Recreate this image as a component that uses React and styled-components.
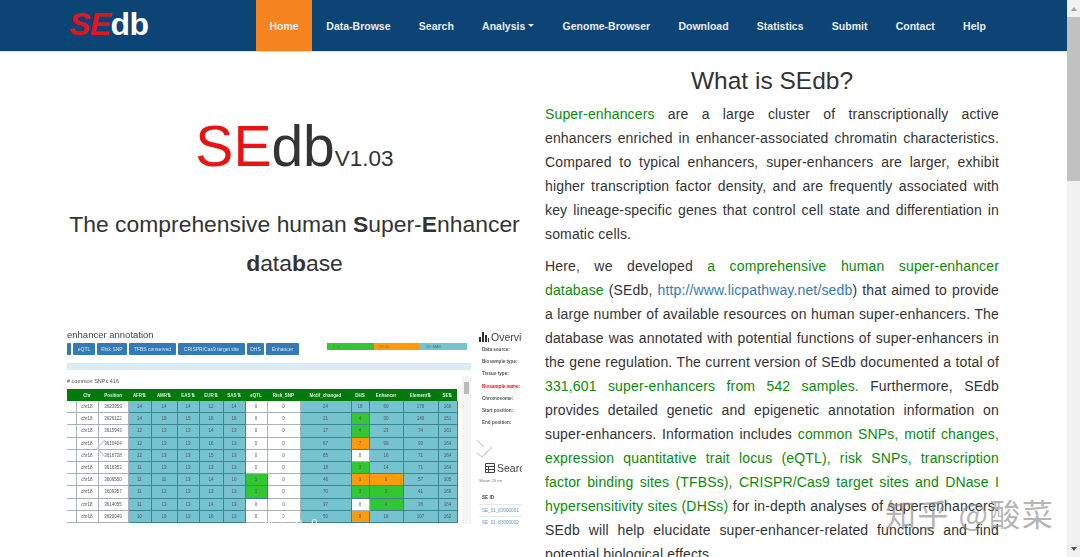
import React from "react";
import styled, { createGlobalStyle } from "styled-components";

const GlobalStyle = createGlobalStyle`
  html, body {
    margin: 0;
    padding: 0;
    overflow: hidden;
    background: #fff;
    font-family: "Liberation Sans", Arial, sans-serif;
  }
`;

const Page = styled.div`
  position: relative;
  display: flex;
  width: 1080px;
  height: 557px;
  overflow: hidden;
`;

const Main = styled.div`
  flex: 1;
  min-width: 0;
`;

const Navbar = styled.nav`
  display: flex;
  height: 51px;
  padding-left: 69px;
  background: #0c4475;
  border-bottom: 1px solid #c9e6f5;
`;

const Logo = styled.div`
  width: 187px;
  flex: none;
  font-size: 32px;
  font-weight: 700;
  line-height: 48px;
  color: #fff;
  letter-spacing: -0.6px;
  span {
    color: #e3141c;
    font-style: italic;
  }
`;

const NavItem = styled.a`
  display: flex;
  align-items: center;
  gap: 3px;
  flex: none;
  padding: 0 ${(p) => p.$pad || 14.15}px;
  font-size: 10.5px;
  font-weight: 700;
  white-space: nowrap;
  color: #e8eef3;
  background: ${(p) => (p.$active ? "#f5831f" : "transparent")};
`;

const Caret = styled.i`
  width: 0;
  height: 0;
  border-top: 3px solid #e8eef3;
  border-left: 3px solid transparent;
  border-right: 3px solid transparent;
`;

const Content = styled.div`
  display: flex;
  gap: 23px;
  padding-left: 67px;
`;

const LeftCol = styled.section`
  width: 455px;
  flex: none;
  color: #333;
  text-align: center;
`;

const BigTitle = styled.h1`
  margin: 59px 0 0;
  font-size: 57px;
  font-weight: 400;
  line-height: 70px;
  color: #333;
  span { color: #ea1313; }
  small { font-size: 22.5px; }
`;

const Subtitle = styled.h2`
  margin: 11px 0 0;
  font-size: 22.9px;
  font-weight: 400;
  line-height: 39px;
  white-space: pre;
  color: #333;
`;

const Shot = styled.div`
  position: relative;
  display: flex;
  gap: 8px;
  height: 197px;
  margin-top: 44px;
  overflow: hidden;
  text-align: left;
  filter: blur(0.5px);
`;

const ShotMain = styled.div`
  width: 404px;
  flex: none;
`;

const ShotTitle = styled.div`
  font-size: 9.5px;
  line-height: 14px;
  color: #444;
  margin-top: 1px;
`;

const ShotBar = styled.div`
  display: flex;
  align-items: center;
  gap: 2px;
  height: 13px;
  white-space: nowrap;
`;

const ShotBtn = styled.span`
  display: block;
  flex: none;
  width: ${(p) => p.$w}px;
  height: 12px;
  font-size: 5px;
  line-height: 12px;
  text-align: center;
  overflow: hidden;
  color: #d5e5f2;
  background: #337ab7;
  border-radius: 1px;
`;

const Legend = styled.div`
  display: flex;
  flex: none;
  margin-left: 26px;
  margin-top: -4px;
  height: 7px;
  font-size: 4px;
  line-height: 7px;
  color: #667;
`;

const LegendPart = styled.span`
  width: ${(p) => p.$w}px;
  padding-left: 6px;
  box-sizing: border-box;
  background: ${(p) => p.$c};
`;

const InfoBand = styled.div`
  height: 7px;
  margin-top: 8px;
  background: #dcecf5;
`;

const ScrollArea = styled.div`
  display: flex;
  gap: 6px;
  height: 150px;
  margin-top: 6px;
  overflow: hidden;
`;

const TableCol = styled.div`
  width: 389px;
  flex: none;
`;

const SnpCount = styled.div`
  margin-top: 1px;
  font-size: 5.5px;
  line-height: 8px;
  color: #555;
`;

const Grid = styled.table`
  width: 389px;
  margin-top: 4px;
  border-collapse: collapse;
  table-layout: fixed;
  font-size: 4.5px;
  color: #556;
  text-align: center;
`;

const Head = styled.th`
  height: 12px;
  padding: 0;
  font-weight: 700;
  color: #d8efd8;
  background: #007a0a;
`;

const Cell = styled.td`
  height: 11.2px;
  padding: 0;
  border: 1px solid ${(p) => (p.$c ? "#3d8490" : "#a5b2b6")};
  border-width: 0 1px 1px 0;
  background: ${(p) => p.$c || "#fff"};
`;

const ShotScroll = styled.div`
  width: 9px;
  flex: none;
  background: #f4f4f4;
  &::before {
    content: "";
    display: block;
    margin: 6px 2px 0;
    height: 12px;
    background: #bbb;
  }
`;

const SidePanel = styled.aside`
  flex: 1;
  min-width: 0;
  overflow: hidden;
  white-space: nowrap;
`;

const PanelHead = styled.div`
  display: flex;
  align-items: center;
  gap: 2px;
  margin-top: 3px;
  font-size: 10.5px;
  line-height: 14px;
  color: #444;
  svg { flex: none; }
`;

const PanelField = styled.div`
  height: 12.2px;
  padding-left: 3px;
  font-size: 4.6px;
  font-weight: 700;
  line-height: 12px;
  color: ${(p) => (p.$red ? "#e3141c" : "#555")};
`;

const SearchHead = styled(PanelHead)`
  margin: 32px 0 0 6px;
`;

const ShowRow = styled.div`
  margin-top: 2px;
  font-size: 4.4px;
  line-height: 8px;
  color: #777;
`;

const SearchRow = styled.div`
  height: 12.4px;
  margin-top: ${(p) => (p.$first ? 7 : 0)}px;
  padding-left: 3px;
  box-sizing: border-box;
  border-bottom: 1px solid #e8e8e8;
  font-size: 4.6px;
  font-weight: ${(p) => (p.$head ? 700 : 400)};
  line-height: 12px;
  color: ${(p) => (p.$head ? "#444" : "#6a94c4")};
`;

const Chevrons = styled.svg`
  position: absolute;
  left: 90px;
  top: 436px;
`;

const RightCol = styled.section`
  width: 454px;
  flex: none;
  color: #333;
  font-size: 14px;
  line-height: 24px;
`;

const Heading = styled.h2`
  margin: 13px 0 0;
  font-size: 24.5px;
  font-weight: 400;
  line-height: 32px;
  text-align: center;
  color: #333;
`;

const Para = styled.p`
  margin: 0 0 8px;
  text-align: justify;
  letter-spacing: 0.15px;
  &:first-of-type { margin-top: 5px; }
`;

const Hl = styled.span`
  color: #0b8a0b;
`;

const Link = styled.a`
  color: #337ab7;
`;

const Scrollbar = styled.div`
  display: flex;
  flex-direction: column;
  width: 13px;
  flex: none;
  background: #f1f1f1;
`;

const ScrollBtn = styled.div`
  display: flex;
  align-items: center;
  justify-content: center;
  height: 17px;
  flex: none;
`;

const Thumb = styled.div`
  height: 164px;
  background: #c1c1c1;
`;

const Arrow = styled.i`
  width: 0;
  height: 0;
  border-left: 3px solid transparent;
  border-right: 3px solid transparent;
  border-${(p) => (p.$down ? "top" : "bottom")}: 4px solid ${(p) => (p.$down ? "#505050" : "#a3a3a3")};
`;

const Spacer = styled.div`
  flex: 1;
`;

const Watermark = styled.div`
  position: absolute;
  left: 885px;
  top: 491px;
  font-family: "Noto Sans CJK SC", sans-serif;
  font-size: 31px;
  line-height: 44px;
  letter-spacing: 1.5px;
  white-space: nowrap;
  color: rgba(130, 130, 130, 0.6);
`;

const ShotMark = styled.div`
  position: absolute;
  left: 262px;
  top: 515px;
  font-size: 11px;
  letter-spacing: 3px;
  line-height: 12px;
  color: rgba(255, 255, 255, 0.8);
`;

const NAV = ["Data-Browse", "Search"];
const NAV_AFTER = ["Genome-Browser", "Download", "Statistics", "Submit", "Contact", "Help"];

const TEAL = "#74c3ce";
const LIME = "#33c633";
const AMBER = "#ff9a0a";

const COLS = [9, 22, 30, 23, 26, 22, 24, 22, 22, 33, 51, 18, 34, 35, 19];
const HEADS = ["", "Chr", "Position", "AFR⇅", "AMR⇅", "EAS⇅", "EUR⇅", "SAS⇅", "eQTL", "Risk_SNP", "Motif_changed", "DHS", "Enhancer", "Element⇅", "SE⇅"];

const ROWS = [
  ["3623359", 14, 14, 14, 12, 14, 0, 0, 24, 18, 60, 178, 166],
  ["3626122", 14, 16, 15, 16, 16, 0, 0, 21, 4, 30, 140, 151],
  ["3615943", 12, 13, 13, 14, 13, 0, 0, 17, 4, 23, 74, 161],
  ["3610404", 12, 13, 13, 16, 13, 0, 0, 67, 7, 99, 93, 164],
  ["3616728", 12, 13, 13, 15, 13, 0, 0, 65, 0, 16, 71, 164],
  ["3616353", 11, 13, 13, 13, 13, 0, 0, 18, 3, 14, 71, 164],
  ["3606550", 11, 11, 13, 14, 10, 1, 0, 46, 9, 6, 57, 105],
  ["3609357", 11, 12, 13, 13, 13, 1, 0, 70, 3, 3, 41, 166],
  ["3614055", 11, 13, 13, 14, 13, 0, 0, 37, 0, 4, 36, 164],
  ["3620049", 10, 16, 13, 16, 13, 0, 0, 50, 9, 16, 107, 162],
];

const BUTTONS = [
  ["", 4],
  ["eQTL", 22],
  ["Risk SNP", 30],
  ["TFBS conserved", 47],
  ["CRISPR/Cas9 target site", 67],
  ["DHS", 17],
  ["Enhancer", 33],
];

// colour of the eQTL / DHS / Enhancer cells follows the legend ranges
const eqtlColor = (v) => (v > 0 ? LIME : undefined);
const dhsColor = (v) => {
  if (v === 0) return undefined;
  if (v < 5) return LIME;
  if (v < 11) return AMBER;
  return TEAL;
};
const enhColor = (v) => {
  if (v < 5) return LIME;
  if (v < 11) return AMBER;
  return TEAL;
};

const ChartIcon = () => (
  <svg width="10" height="10" viewBox="0 0 10 10">
    <path d="M0 5h2v5H0zM3 0h2v10H3zM6 3h2v7H6zM9 6h1v4H9z" fill="#333" />
  </svg>
);

const ListIcon = () => (
  <svg width="10" height="10" viewBox="0 0 10 10" fill="none" stroke="#444" strokeWidth="1">
    <path d="M.5.5h9v9h-9zM.5 3.500h9M.5 6.500h9M3.500 3.500v6" />
  </svg>
);

const App = () => (
  <>
    <GlobalStyle />
    <Page>
      <Main>
        <Navbar>
          <Logo>
            <span>SE</span>db
          </Logo>
          <NavItem $active $pad={13.5}>Home</NavItem>
          {NAV.map((n) => (
            <NavItem key={n}>{n}</NavItem>
          ))}
          <NavItem>
            Analysis<Caret />
          </NavItem>
          {NAV_AFTER.map((n) => (
            <NavItem key={n}>{n}</NavItem>
          ))}
        </Navbar>
        <Content>
          <LeftCol>
            <BigTitle>
              <span>SE</span>db<small>V1.03</small>
            </BigTitle>
            <Subtitle>
              The comprehensive human <b>S</b>uper-<b>E</b>nhancer{"\n"}
              <b>d</b>ata<b>b</b>ase
            </Subtitle>
            <Shot>
              <ShotMain>
                <ShotTitle>enhancer annotation</ShotTitle>
                <ShotBar>
                  {BUTTONS.map(([label, w]) => (
                    <ShotBtn key={w} $w={w}>{label}</ShotBtn>
                  ))}
                  <Legend>
                    <LegendPart $w={47} $c={LIME}>1~4</LegendPart>
                    <LegendPart $w={46} $c={AMBER}>5~10</LegendPart>
                    <LegendPart $w={47} $c={TEAL}>10~MAX</LegendPart>
                  </Legend>
                </ShotBar>
                <InfoBand />
                <ScrollArea>
                  <TableCol>
                    <SnpCount># common SNPs:416</SnpCount>
                    <Grid>
                      <colgroup>
                        {COLS.map((w, i) => (
                          <col key={i} style={{ width: w }} />
                        ))}
                      </colgroup>
                      <thead>
                        <tr>
                          {HEADS.map((h, i) => (
                            <Head key={i}>{h}</Head>
                          ))}
                        </tr>
                      </thead>
                      <tbody>
                        {ROWS.map((r) => (
                          <tr key={r[0]}>
                            <Cell />
                            <Cell>chr18</Cell>
                            <Cell>{r[0]}</Cell>
                            {r.slice(1, 6).map((v, i) => (
                              <Cell key={i} $c={TEAL}>{v}</Cell>
                            ))}
                            <Cell $c={eqtlColor(r[6])}>{r[6]}</Cell>
                            <Cell>{r[7]}</Cell>
                            <Cell $c={TEAL}>{r[8]}</Cell>
                            <Cell $c={dhsColor(r[9])}>{r[9]}</Cell>
                            <Cell $c={enhColor(r[10])}>{r[10]}</Cell>
                            <Cell $c={TEAL}>{r[11]}</Cell>
                            <Cell $c={TEAL}>{r[12]}</Cell>
                          </tr>
                        ))}
                      </tbody>
                    </Grid>
                  </TableCol>
                  <ShotScroll />
                </ScrollArea>
              </ShotMain>
              <SidePanel>
                <PanelHead>
                  <ChartIcon />
                  Overview
                </PanelHead>
                <PanelField>Data source:</PanelField>
                <PanelField>Biosample type:</PanelField>
                <PanelField>Tissue type:</PanelField>
                <PanelField $red>Biosample name:</PanelField>
                <PanelField>Chromosome:</PanelField>
                <PanelField>Start position:</PanelField>
                <PanelField>End position:</PanelField>
                <SearchHead>
                  <ListIcon />
                  Search
                </SearchHead>
                <ShowRow>Show 20 en</ShowRow>
                <SearchRow $head $first>SE ID</SearchRow>
                <SearchRow>SE_01_83000001</SearchRow>
                <SearchRow>SE_01_83000002</SearchRow>
              </SidePanel>
            </Shot>
          </LeftCol>
          <RightCol>
            <Heading>What is SEdb?</Heading>
            <Para>
              <Hl>Super-enhancers</Hl> are a large cluster of transcriptionally active enhancers enriched in enhancer-associated chromatin characteristics. Compared to typical enhancers, super-enhancers are larger, exhibit higher transcription factor density, and are frequently associated with key lineage-specific genes that control cell state and differentiation in somatic cells.
            </Para>
            <Para>
              Here, we developed <Hl>a comprehensive human super-enhancer database</Hl> (SEdb, <Link>http://www.licpathway.net/sedb</Link>) that aimed to provide a large number of available resources on human super-enhancers. The database was annotated with potential functions of super-enhancers in the gene regulation. The current version of SEdb documented a total of <Hl>331,601 super-enhancers from 542 samples.</Hl> Furthermore, SEdb provides detailed genetic and epigenetic annotation information on super-enhancers. Information includes <Hl>common SNPs, motif changes, expression quantitative trait locus (eQTL), risk SNPs, transcription factor binding sites (TFBSs), CRISPR/Cas9 target sites and DNase I hypersensitivity sites (DHSs)</Hl> for in-depth analyses of super-enhancers. SEdb will help elucidate super-enhancer-related functions and find potential biological effects.
            </Para>
          </RightCol>
        </Content>
      </Main>
      <Scrollbar>
        <ScrollBtn><Arrow /></ScrollBtn>
        <Thumb />
        <Spacer />
        <ScrollBtn><Arrow $down /></ScrollBtn>
      </Scrollbar>
      <Chevrons width="410" height="26" viewBox="0 0 410 26" fill="none" stroke="#cfcfcf" strokeWidth="1.200">
        <path d="M15 4l-8 8 8 9" />
        <path d="M387 4l7 7M402 11l-10 10-5-4" />
      </Chevrons>
      <ShotMark>知乎 o o</ShotMark>
      <Watermark>知乎 @酸菜</Watermark>
    </Page>
  </>
);

export default App;
